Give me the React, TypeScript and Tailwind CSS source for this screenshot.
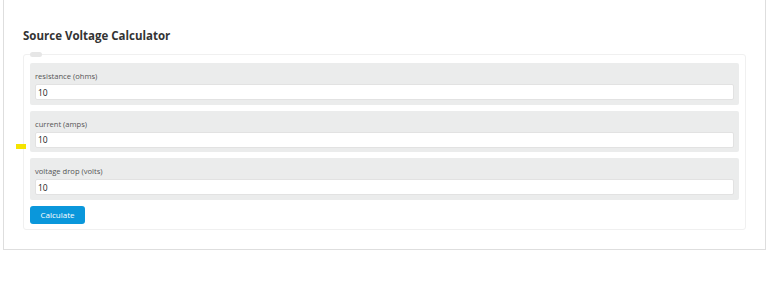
const fields = [
  { label: "resistance (ohms)", value: "10" },
  { label: "current (amps)", value: "10" },
  { label: "voltage drop (volts)", value: "10" },
];

export default function App() {
  return (
    <div
      className="relative h-[303px] w-[768px] bg-white"
      style={{ fontFamily: '"Open Sans", "Noto Sans", sans-serif' }}
    >
      <div className="ml-[3px] h-[250px] w-[763px] border border-t-0 border-[#dedede] bg-white px-[19px] pt-[27px]">
        <h2 className="text-[11.5px] font-bold leading-[18px] text-[#333]">Source Voltage Calculator</h2>

        <div className="relative mt-[9px] rounded-[3px] border border-[#f0f0f0] px-[6px] pb-[5px] pt-[8px]">
          <span className="absolute left-[6px] top-[-3px] h-[5px] w-[12px] rounded-full bg-[#e6e6e6]" />
          <div className="flex flex-col gap-[6px]">
            {fields.map((f) => (
              <div key={f.label} className="h-[41.5px] rounded-[2px] bg-[#ebecec] px-[5px] pt-[6px]">
                <label className="block text-[7.6px] leading-[14px] text-[#555]">{f.label}</label>
                <input
                  readOnly
                  value={f.value}
                  className="mt-[1px] block h-[16px] w-full rounded-[2px] border border-[#e2e2e2] bg-white px-[2px] text-[8.5px] text-[#222] outline-none"
                />
              </div>
            ))}
          </div>
          <button className="mt-[6px] h-[18px] w-[55px] rounded-[3px] bg-[#0a97db] text-[8px] text-white">
            Calculate
          </button>
        </div>
      </div>

      <span className="absolute left-[16px] top-[144px] h-[5px] w-[10px] bg-[#f5e400]" />
    </div>
  );
}
